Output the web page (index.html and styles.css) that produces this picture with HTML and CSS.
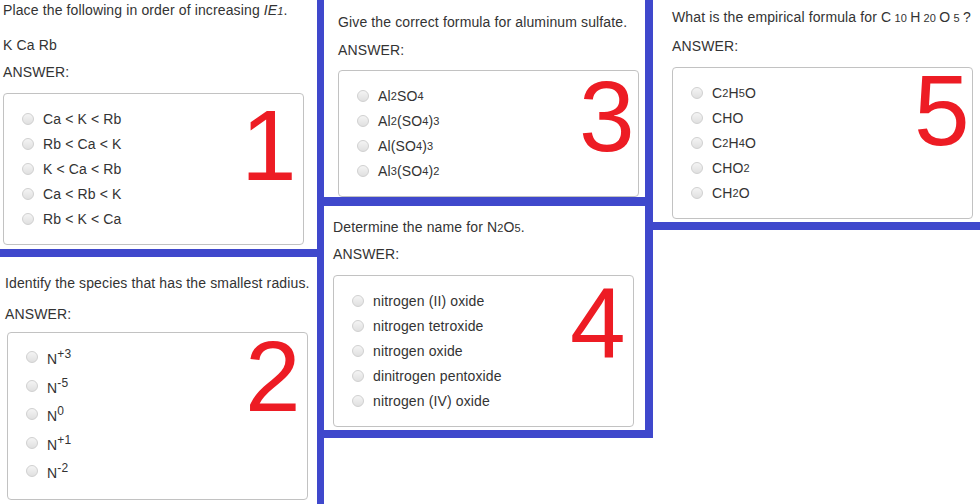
FILE: index.html
```html
<!DOCTYPE html>
<html>
<head>
<meta charset="utf-8">
<title>Chemistry questions</title>
<link rel="stylesheet" href="styles.css">
</head>
<body>
<div class="collage">
  <div class="col col1">
    <section class="panel p1">
      <p class="q">Place the following in order of increasing <i>IE<span class="s">1</span></i>.</p>
      <p class="q extra">K Ca Rb</p>
      <p class="ans">ANSWER:</p>
      <div class="box">
        <div class="opt"><span class="radio"></span>Ca &lt; K &lt; Rb</div>
        <div class="opt"><span class="radio"></span>Rb &lt; Ca &lt; K</div>
        <div class="opt"><span class="radio"></span>K &lt; Ca &lt; Rb</div>
        <div class="opt"><span class="radio"></span>Ca &lt; Rb &lt; K</div>
        <div class="opt"><span class="radio"></span>Rb &lt; K &lt; Ca</div>
        <span class="num n1">1</span>
      </div>
    </section>
    <section class="panel p2">
      <p class="q">Identify the species that has the smallest radius.</p>
      <p class="ans">ANSWER:</p>
      <div class="box tall">
        <div class="opt"><span class="radio"></span><span class="sp">N<span class="up">+3</span></span></div>
        <div class="opt"><span class="radio"></span><span class="sp">N<span class="up">-5</span></span></div>
        <div class="opt"><span class="radio"></span><span class="sp">N<span class="up">0</span></span></div>
        <div class="opt"><span class="radio"></span><span class="sp">N<span class="up">+1</span></span></div>
        <div class="opt"><span class="radio"></span><span class="sp">N<span class="up">-2</span></span></div>
        <span class="num n2">2</span>
      </div>
    </section>
  </div>
  <div class="col col2">
    <div class="stack">
      <section class="panel p3">
        <p class="q">Give the correct formula for aluminum sulfate.</p>
        <p class="ans">ANSWER:</p>
        <div class="box">
          <div class="opt"><span class="radio"></span>Al<span class="s">2</span>SO<span class="s">4</span></div>
          <div class="opt"><span class="radio"></span>Al<span class="s">2</span>(SO<span class="s">4</span>)<span class="s">3</span></div>
          <div class="opt"><span class="radio"></span>Al(SO<span class="s">4</span>)<span class="s">3</span></div>
          <div class="opt"><span class="radio"></span>Al<span class="s">3</span>(SO<span class="s">4</span>)<span class="s">2</span></div>
          <span class="num n3">3</span>
        </div>
      </section>
      <section class="panel p4">
        <p class="q">Determine the name for N<span class="s">2</span>O<span class="s">5</span>.</p>
        <p class="ans">ANSWER:</p>
        <div class="box">
          <div class="opt"><span class="radio"></span>nitrogen (II) oxide</div>
          <div class="opt"><span class="radio"></span>nitrogen tetroxide</div>
          <div class="opt"><span class="radio"></span>nitrogen oxide</div>
          <div class="opt"><span class="radio"></span>dinitrogen pentoxide</div>
          <div class="opt"><span class="radio"></span>nitrogen (IV) oxide</div>
          <span class="num n4">4</span>
        </div>
      </section>
    </div>
  </div>
  <div class="col col3">
    <section class="panel p5">
      <p class="q">What is the empirical formula for C<span class="s"> 10 </span>H<span class="s"> 20 </span>O<span class="s"> 5 </span>?</p>
      <p class="ans">ANSWER:</p>
      <div class="box">
        <div class="opt"><span class="radio"></span>C<span class="s">2</span>H<span class="s">5</span>O</div>
        <div class="opt"><span class="radio"></span>CHO</div>
        <div class="opt"><span class="radio"></span>C<span class="s">2</span>H<span class="s">4</span>O</div>
        <div class="opt"><span class="radio"></span>CHO<span class="s">2</span></div>
        <div class="opt"><span class="radio"></span>CH<span class="s">2</span>O</div>
        <span class="num n5">5</span>
      </div>
    </section>
  </div>
</div>
</body>
</html>
```

FILE: styles.css
```css
html, body {
  margin: 0;
  padding: 0;
  background: #ffffff;
}

body {
  font-family: "Liberation Sans", Arial, sans-serif;
  font-size: 14px;
  letter-spacing: 0.13px;
  color: #333333;
}

.collage {
  display: flex;
  width: 980px;
  height: 504px;
  overflow: hidden;
}

.col {
  display: flex;
  flex-direction: column;
  flex: none;
}

.col1 {
  width: 317px;
  border-right: 7px solid #3f48cc;
}

.col2 {
  width: 329px;
}

.stack {
  width: 321px;
  border-right: 8px solid #3f48cc;
  border-bottom: 8px solid #3f48cc;
}

.col3 {
  width: 327px;
}

.panel {
  box-sizing: border-box;
  overflow: hidden;
}

.q, .ans {
  margin: 0;
  line-height: 20px;
  white-space: nowrap;
}

.s {
  font-size: 11px;
}

.sp {
  display: inline-block;
  line-height: 16px;
  padding-top: 4px;
}

.up {
  display: inline-block;
  font-size: 12px;
  line-height: 12px;
  vertical-align: top;
  margin-top: -3px;
}

.box {
  position: relative;
  width: 301px;
  box-sizing: border-box;
  border: 1px solid #c2c2c2;
  border-radius: 4px;
  padding: 12px 0 13px 18px;
}

.opt {
  display: flex;
  align-items: center;
  height: 25px;
  white-space: nowrap;
}

.radio {
  flex: none;
  width: 12px;
  height: 12px;
  box-sizing: border-box;
  border-radius: 50%;
  border: 1px solid #d0d0d0;
  background: linear-gradient(#f4f4f4, #e0e0e0);
  margin-right: 9px;
}

.num {
  position: absolute;
  font-size: 100px;
  line-height: 100px;
  letter-spacing: 0;
  color: #ed1c24;
}

/* panel 1 */
.p1 {
  height: 257px;
  padding-left: 3px;
  border-bottom: 8px solid #3f48cc;
}
.p1 .q { margin-bottom: 14px; }
.p1 .extra { margin-bottom: 7px; }
.p1 .ans { margin-bottom: 11px; }
.n1 { left: 237px; top: 1px; }

/* panel 2 */
.p2 {
  flex: 1;
  padding: 16px 0 0 5px;
}
.p2 .q { margin-bottom: 11px; }
.p2 .ans { margin-bottom: 8px; }
.p2 .box { margin-left: 2px; padding-top: 10px; padding-bottom: 13px; }
.p2 .opt { height: 28.5px; }
.n2 { left: 237px; top: -7px; }

/* panel 3 */
.p3 {
  height: 206px;
  padding: 12px 0 0 14px;
  border-bottom: 9px solid #3f48cc;
}
.p3 .q { margin-bottom: 8px; }
.p3 .ans { margin-bottom: 10px; }
.n3 { left: 240px; top: -5px; }

/* panel 4 */
.p4 {
  height: 224px;
  padding: 11px 0 0 9px;
}
.p4 .q { margin-bottom: 6px; }
.p4 .ans { margin-bottom: 11px; }
.n4 { left: 236px; top: -3px; }

/* panel 5 */
.p5 {
  height: 230px;
  padding: 7px 0 0 19px;
  border-bottom: 8px solid #3f48cc;
}
.p5 .q { margin-bottom: 8px; }
.p5 .ans { margin-bottom: 11px; }
.n5 { left: 241px; top: -8px; }
```
